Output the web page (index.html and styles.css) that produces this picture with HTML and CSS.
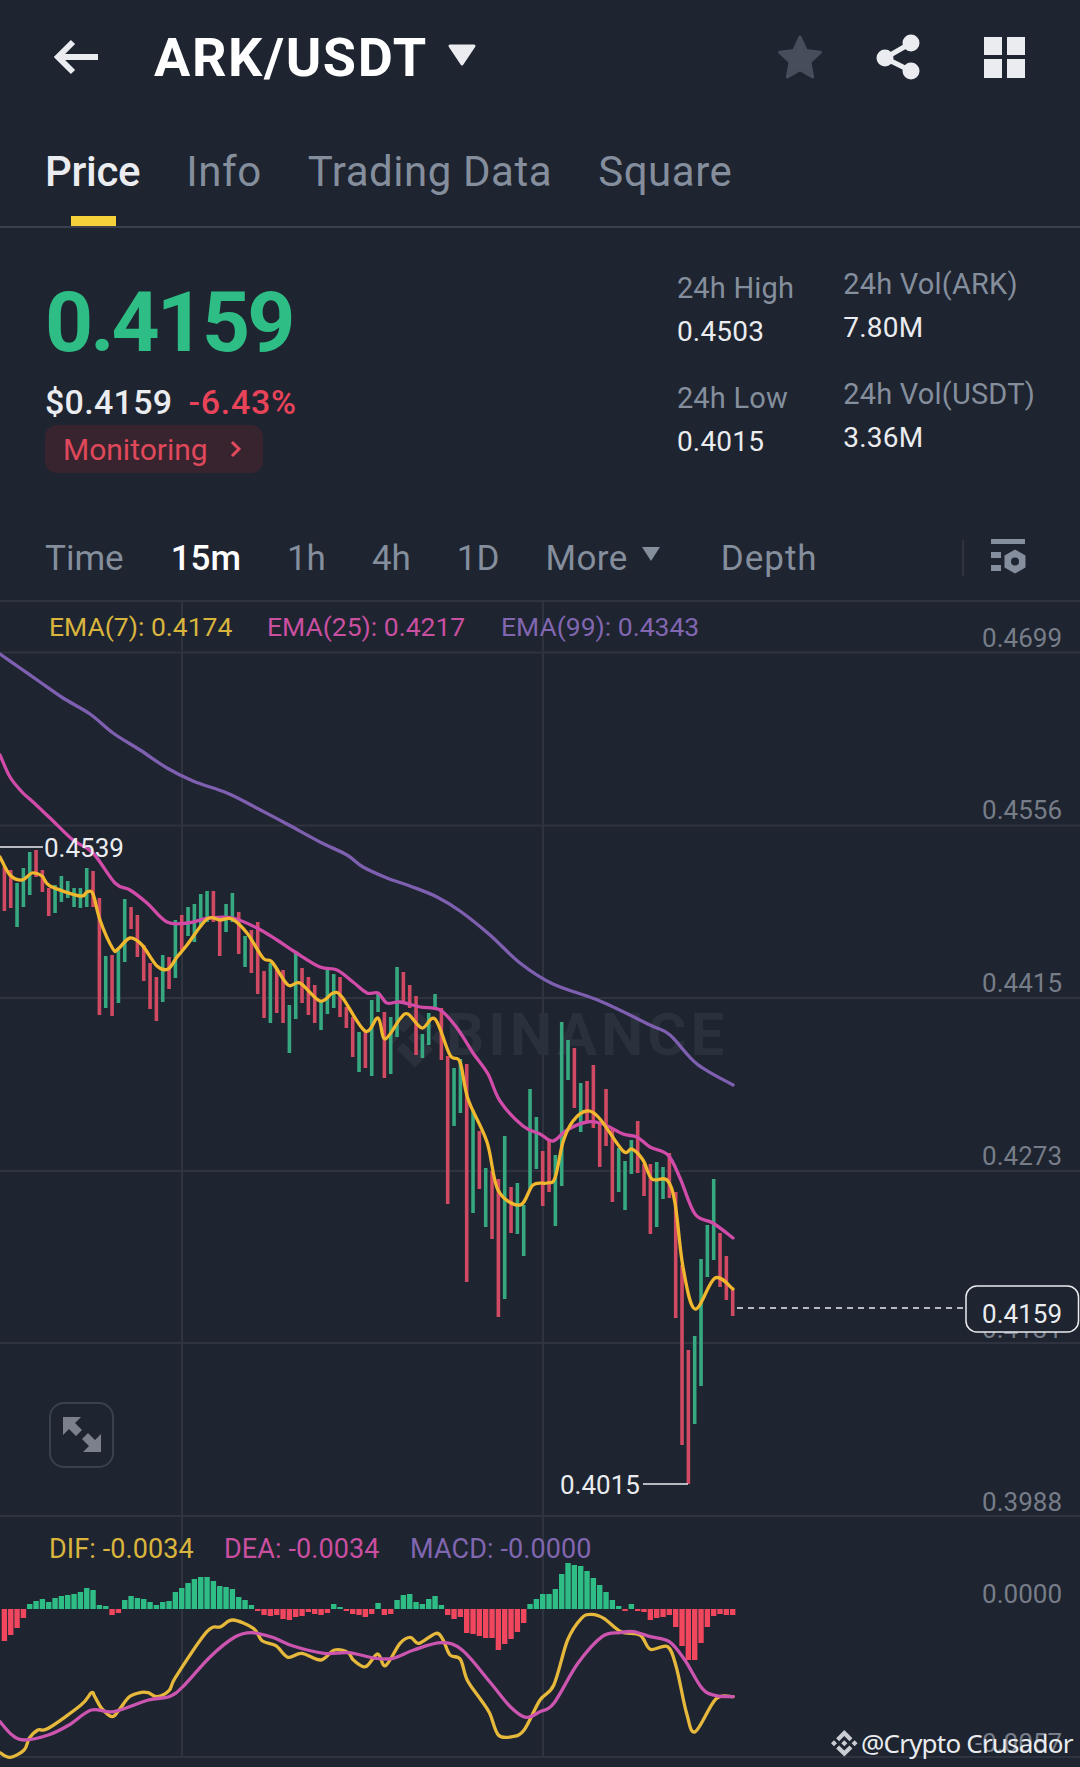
FILE: index.html
```html
<!DOCTYPE html>
<html lang="en">
<head>
    <meta charset="UTF-8">
    <meta name="viewport" content="width=device-width, initial-scale=1.0">
    <title>ARK/USDT</title>
    <link rel="stylesheet" href="styles.css">
</head>
<body>
    <header class="topbar">
        <svg class="icon-back" viewBox="0 0 46 36" width="46" height="36">
            <path d="M45 18H6M20 3 5 18l15 15" fill="none" stroke="#eaecef" stroke-width="6"/>
        </svg>
        <h1 class="pair">ARK/USDT</h1>
        <svg class="icon-caret" viewBox="0 0 30 24" width="30" height="24">
            <path d="M3 3h24L15 21z" fill="#eaecef" stroke="#eaecef" stroke-width="3" stroke-linejoin="round"/>
        </svg>
        <div class="topbar-actions">
            <svg class="icon-star" viewBox="0 0 46 46" width="46" height="46">
                <path d="M23 3l6.2 13.5 14.3 1.7-10.6 10 2.8 14.8L23 35.6 10.300 43l2.800-14.800L2.500 18.200l14.300-1.700z" fill="#474d5a" stroke="#474d5a" stroke-width="3" stroke-linejoin="round"/>
            </svg>
            <svg class="icon-share" viewBox="0 0 44 46" width="44" height="46">
                <path d="M35 9 9 24l26 13" fill="none" stroke="#eaecef" stroke-width="5"/>
                <circle cx="35" cy="9" r="8.500" fill="#eaecef"/>
                <circle cx="9" cy="24" r="8.500" fill="#eaecef"/>
                <circle cx="35" cy="37" r="8.500" fill="#eaecef"/>
            </svg>
            <div class="icon-grid"><span></span><span></span><span></span><span></span></div>
        </div>
    </header>

    <nav class="tabs">
        <a class="tab active">Price</a>
        <a class="tab">Info</a>
        <a class="tab">Trading Data</a>
        <a class="tab">Square</a>
    </nav>

    <section class="summary">
        <div class="price-box">
            <div class="price">0.4159</div>
            <div class="price-sub">
                <span class="usd">$0.4159</span>
                <span class="change">-6.43%</span>
            </div>
            <div class="monitor">
                Monitoring
                <svg viewBox="0 0 12 18" width="12" height="18">
                    <path d="M2 2l7 7-7 7" fill="none" stroke="#e0485c" stroke-width="3"/>
                </svg>
            </div>
        </div>
        <div class="stats">
            <div class="stat-col">
                <div class="stat-label">24h High</div>
                <div class="stat-value">0.4503</div>
                <div class="stat-label second">24h Low</div>
                <div class="stat-value">0.4015</div>
            </div>
            <div class="stat-col shifted">
                <div class="stat-label">24h Vol(ARK)</div>
                <div class="stat-value">7.80M</div>
                <div class="stat-label second">24h Vol(USDT)</div>
                <div class="stat-value">3.36M</div>
            </div>
        </div>
    </section>

    <div class="intervals">
        <span class="interval first">Time</span>
        <span class="interval current">15m</span>
        <span class="interval">1h</span>
        <span class="interval">4h</span>
        <span class="interval">1D</span>
        <span class="interval more">More</span>
        <svg class="icon-more" viewBox="0 0 20 15" width="20" height="15">
            <path d="M1 1h18L10 15z" fill="#848e9c"/>
        </svg>
        <span class="interval depth">Depth</span>
        <div class="divider"></div>
        <svg class="icon-settings" viewBox="0 0 36 36" width="36" height="36">
            <path d="M1 1h34v5H1zM1 14h10v6H1zM1 27h10v6H1z" fill="#848e9c"/>
            <path d="M25 11.500l10.500 6v12L25 35.500l-10.500-6v-12z" fill="#848e9c"/>
            <circle cx="25" cy="23.500" r="4" fill="#1e2430"/>
        </svg>
    </div>

    <div class="chart">
        <svg class="chart-svg" viewBox="0 602 1080 1165" width="1080" height="1165">
            <defs>
                <path id="binance-logo" d="M38.730 53.200l24.590-24.580 24.600 24.600 14.300-14.310L63.320 0 24.420 38.900zM0 63.310L14.300 49l14.310 14.310-14.310 14.300zM38.730 73.410L63.320 98l24.600-24.600 14.310 14.290-38.900 38.910-38.910-38.880zM98 63.310L112.300 49l14.310 14.300-14.310 14.320zM77.830 63.300L63.320 48.780 48.810 63.280l14.510 14.500z"/>
            </defs>
            <g id="grid"></g>
            <g class="watermark">
                <use href="#binance-logo" transform="translate(385 1008) scale(.47)"/>
                <text x="446" y="1055" class="watermark-text">BINANCE</text>
            </g>
            <g id="candles"></g>
            <g id="histogram"></g>
            <g id="lines"></g>

            <text x="49" y="636" class="legend ema7">EMA(7): 0.4174</text>
            <text x="267" y="636" class="legend ema25">EMA(25): 0.4217</text>
            <text x="501" y="636" class="legend ema99">EMA(99): 0.4343</text>

            <text x="1062" y="647" class="axis">0.4699</text>
            <text x="1062" y="819" class="axis">0.4556</text>
            <text x="1062" y="992" class="axis">0.4415</text>
            <text x="1062" y="1165" class="axis">0.4273</text>
            <text x="1062" y="1338" class="axis">0.4131</text>
            <text x="1062" y="1511" class="axis">0.3988</text>
            <text x="1062" y="1603" class="axis">0.0000</text>
            <text x="1062" y="1752" class="axis">-0.0057</text>

            <path d="M0 847H43M643 1484H688" stroke="#eaecef" stroke-width="1.500" fill="none"/>
            <text x="44" y="857" class="mark">0.4539</text>
            <text x="560" y="1494" class="mark">0.4015</text>

            <path d="M737 1308H966" stroke="#eaecef" stroke-width="1.500" stroke-dasharray="6 5" fill="none"/>
            <rect x="966" y="1286" width="112.500" height="46" rx="11" class="last-box"/>
            <text x="1062" y="1323" class="axis last-price">0.4159</text>

            <rect x="50" y="1403" width="63" height="64" rx="14" class="expand-box"/>
            <path d="M63 1417h18l-6 6 7 7-6 6-7-7-6 6zM101 1452H83l6-6-7-7 6-6 7 7 6-6z" fill="#7b808c"/>

            <text x="49" y="1558" class="legend macd ema7">DIF: -0.0034</text>
            <text x="224" y="1558" class="legend macd ema25">DEA: -0.0034</text>
            <text x="410" y="1558" class="legend macd ema99">MACD: -0.0000</text>

            <use href="#binance-logo" transform="translate(831 1730) scale(.21)" class="credit-logo"/>
            <text x="861" y="1753" class="credit">@Crypto Crusador</text>
        </svg>
    </div>

    <script src="chart.js"></script>
</body>
</html>
```

FILE: styles.css
```css
* {
    margin: 0;
    padding: 0;
    box-sizing: border-box;
}
body {
    width: 1080px;
    height: 1767px;
    font-family: Roboto, "Liberation Sans", sans-serif;
    background-color: #1e2430;
    color: #eaecef;
    overflow: hidden;
}
.topbar {
    display: flex;
    align-items: center;
    height: 114px;
    padding-left: 53px;
}
.pair {
    margin-left: 55px;
    font-size: 54px;
    font-weight: 700;
    letter-spacing: 1.6px;
    color: #fff;
}
.icon-caret {
    margin-left: 19px;
    margin-top: -4px;
}
.topbar-actions {
    display: flex;
    align-items: center;
    gap: 53px;
    margin-left: auto;
    padding-right: 55px;
}
.icon-grid {
    display: grid;
    grid-template-columns: 18px 18px;
    grid-template-rows: 18px 19px;
    gap: 4px 5px;
    margin-left: 11px;
}
.icon-grid span {
    background: #eaecef;
}
.tabs {
    display: flex;
    gap: 46px;
    height: 114px;
    padding: 34px 0 0 45px;
    border-bottom: 2px solid #3a404d;
}
.tab {
    position: relative;
    font-size: 42px;
    line-height: 48px;
    height: 48px;
    letter-spacing: 0.55px;
    color: #848e9c;
}
.tab.active {
    color: #eaecef;
    font-weight: 500;
    letter-spacing: -0.3px;
}
.tab.active::after {
    content: "";
    position: absolute;
    left: 26px;
    top: 68px;
    width: 45px;
    height: 10px;
    background: #f5d13a;
}
.summary {
    display: flex;
    justify-content: space-between;
    height: 296px;
    padding: 46px 0 0 45px;
}
.price {
    font-size: 84px;
    line-height: 98px;
    font-weight: 700;
    letter-spacing: -3px;
    color: #2ebd85;
}
.price-sub {
    display: flex;
    gap: 16px;
    margin-top: 10px;
    font-size: 34px;
    line-height: 40px;
    font-weight: 500;
    letter-spacing: 0.3px;
}
.change {
    color: #e94359;
    letter-spacing: 0.7px;
}
.monitor {
    display: inline-flex;
    align-items: center;
    gap: 22px;
    width: 218px;
    height: 48px;
    margin-top: 3px;
    padding-left: 18px;
    border-radius: 12px;
    background: #38242e;
    color: #e0485c;
    font-size: 30px;
}
.stats {
    display: flex;
    gap: 49px;
    margin-top: -3px;
    padding-right: 45px;
}
.stat-col.shifted {
    margin-top: -4px;
}
.stat-label {
    font-size: 29px;
    line-height: 34px;
    letter-spacing: 0.2px;
    color: #848e9c;
}
.stat-label.second {
    margin-top: 32px;
}
.stat-value {
    margin-top: 10px;
    font-size: 28px;
    line-height: 34px;
    letter-spacing: 0.2px;
    color: #eaecef;
}
.intervals {
    display: flex;
    align-items: center;
    height: 78px;
    padding: 0 0 8px 45px;
    border-bottom: 2px solid #2e333f;
}
.interval {
    margin-right: 46px;
    font-size: 35px;
    color: #848e9c;
}
.interval.first {
    margin-right: 47px;
}
.interval.current {
    color: #fff;
    font-weight: 500;
}
.interval.more {
    margin-right: 13px;
    letter-spacing: 0.4px;
}
.icon-more {
    margin-top: -10px;
}
.interval.depth {
    margin-left: 60px;
    margin-right: 0;
    letter-spacing: 1px;
}
.divider {
    width: 2px;
    height: 36px;
    margin-left: auto;
    background: #2e333f;
}
.icon-settings {
    margin: -4px 54px 0 26px;
}
.chart {
    height: 1165px;
}
.chart-svg {
    display: block;
}
.legend {
    font-size: 26.5px;
}
.legend.macd {
    font-size: 27px;
    letter-spacing: 0.1px;
}
.ema7 { fill: #d9b53e; }
.ema25 { fill: #c94fa0; }
.ema99 { fill: #8166b0; }
.axis {
    font-size: 26px;
    text-anchor: end;
    fill: #777d88;
}
.mark {
    font-size: 26px;
    fill: #eaecef;
}
.last-box {
    fill: #1e2430;
    stroke: #eaecef;
    stroke-width: 1.5;
}
.axis.last-price {
    fill: #eaecef;
}
.expand-box {
    fill: none;
    stroke: #3a404c;
    stroke-width: 2;
}
.watermark {
    fill: #2a303c;
}
.watermark-text {
    font-size: 60px;
    font-weight: 700;
    letter-spacing: 4px;
}
.credit-logo {
    fill: #c9ccd2;
}
.credit {
    font-family: "Noto Sans", sans-serif;
    font-size: 26px;
    letter-spacing: -0.8px;
    fill: #eaecef;
}
```

FILE: chart.js
```js
const NS = 'http://www.w3.org/2000/svg';
const GREEN = '#36a981', RED = '#cf4a62';

function add(parent, name, attrs) {
    const el = document.createElementNS(NS, name);
    for (const key in attrs) el.setAttribute(key, attrs[key]);
    document.getElementById(parent).appendChild(el);
}

function barX(i) {
    return 4.4 + 6.333 * i;
}

// smooth line through the points (catmull-rom to bezier)
function line(parent, pts, color) {
    let d = `M${pts[0][0]} ${pts[0][1]}`;
    for (let i = 0; i < pts.length - 1; i++) {
        const p0 = pts[i - 1] || pts[i], p1 = pts[i], p2 = pts[i + 1], p3 = pts[i + 2] || p2;
        const c1x = p1[0] + (p2[0] - p0[0]) / 6, c1y = p1[1] + (p2[1] - p0[1]) / 6;
        const c2x = p2[0] - (p3[0] - p1[0]) / 6, c2y = p2[1] - (p3[1] - p1[1]) / 6;
        d += `C${c1x.toFixed(1)} ${c1y.toFixed(1)} ${c2x.toFixed(1)} ${c2y.toFixed(1)} ${p2[0]} ${p2[1]}`;
    }
    add(parent, 'path', {
        d: d,
        fill: 'none',
        stroke: color,
        'stroke-width': 3.3,
        'stroke-linejoin': 'round',
        'stroke-linecap': 'round'
    });
}

// grid
[652.5, 825.5, 998, 1171, 1343, 1516, 1757].forEach(y => {
    add('grid', 'path', { d: `M0 ${y}H1080`, stroke: '#2e333f', 'stroke-width': 2 });
});
[182, 543].forEach(x => {
    add('grid', 'path', { d: `M${x} 602V1757`, stroke: '#2e333f', 'stroke-width': 2 });
});

// candles: [g/r, top, bottom] in page pixels
const candles = [
    ['r',867,911],['r',870,908],['g',883,927],['g',868,907],['g',852,895],['r',850,877],['r',870,892],['r',888,916],
    ['g',885,913],['g',876,902],['g',881,898],['g',888,907],['g',888,908],['g',868,907],['r',871,907],['r',898,1015],
    ['g',956,1008],['r',955,1016],['g',950,1003],['g',899,962],['r',907,929],['r',915,957],['r',945,981],['r',963,1009],
    ['r',977,1021],['g',955,1002],['r',957,989],['g',920,978],['r',915,950],['g',907,936],['g',904,942],['g',894,927],
    ['g',891,922],['r',891,922],['r',918,956],['g',904,932],['g',893,922],['r',912,954],['g',936,967],['r',930,973],
    ['r',922,994],['r',971,1018],['g',963,1023],['r',968,1013],['r',970,1023],['g',1005,1053],['g',951,1019],['r',968,1003],
    ['r',977,1015],['r',985,1023],['g',1002,1030],['g',970,1014],['g',974,1008],['r',977,1017],['r',1007,1028],['r',1017,1057],
    ['g',1032,1072],['r',1030,1068],['g',1000,1076],['g',992,1012],['r',1012,1078],['g',1017,1074],['g',967,1037],
    ['r',972,1001],['r',985,1008],['r',996,1055],['g',1034,1058],['g',1013,1045],['g',994,1008],['r',1008,1060],['r',1056,1204],
    ['g',1068,1126],['g',1059,1113],['r',1064,1282],['g',1110,1213],['r',1131,1189],['g',1168,1227],['r',1171,1239],['r',1179,1317],
    ['g',1136,1299],['r',1187,1233],['g',1183,1234],['g',1205,1256],['g',1089,1189],['g',1117,1169],['r',1151,1206],['r',1140,1192],
    ['g',1155,1226],['g',1022,1186],['g',1040,1080],['r',1048,1108],['g',1083,1132],['r',1081,1121],['r',1065,1128],['r',1124,1167],
    ['r',1089,1146],['r',1128,1202],['g',1148,1192],['g',1161,1210],['g',1140,1174],['r',1121,1173],['r',1164,1196],['r',1164,1234],
    ['g',1162,1227],['g',1167,1199],['r',1153,1198],['r',1192,1318],['r',1265,1445],['r',1350,1484],['g',1336,1424],['g',1259,1386],
    ['g',1225,1277],['g',1179,1260],['r',1233,1287],['r',1256,1300],['r',1290,1316]
];
candles.forEach((c, i) => {
    add('candles', 'path', {
        d: `M${barX(i)} ${c[1]}V${c[2]}`,
        stroke: c[0] === 'g' ? GREEN : RED,
        'stroke-width': 3.6
    });
});

line('lines', [[0,654],[20,668],[40,682],[63,698],[90,714],[113,733],[140,750],[167,768],[193,781],[227,793],[253,806],[287,824],[320,842],[347,855],[363,867],[387,878],[410,886],[437,897],[460,911],[490,935],[520,963],[553,984],[600,1001],[650,1025],[670,1035],[697,1064],[733,1085]], '#7f5fb0');

line('lines', [[0,755],[10,777],[22,792],[33,802],[50,818],[73,840],[93,853],[115,883],[130,890],[147,903],[167,922],[187,923],[210,918],[233,918],[257,928],[277,940],[295,952],[320,967],[337,970],[353,982],[367,993],[378,993],[387,1003],[400,1002],[420,1007],[440,1010],[457,1028],[473,1053],[488,1074],[500,1101],[523,1126],[540,1134],[553,1141],[567,1130],[587,1122],[603,1124],[623,1134],[637,1137],[650,1147],[668,1155],[680,1178],[695,1214],[713,1223],[733,1238]], '#d04ca8');

line('lines', [[0,857],[10,875],[22,880],[32,873],[42,876],[50,886],[80,896],[87,892],[93,894],[100,920],[113,949],[118,949],[130,938],[142,945],[157,966],[168,969],[177,957],[187,945],[207,919],[220,920],[232,919],[247,933],[263,958],[272,962],[288,985],[300,983],[320,1001],[333,993],[342,997],[365,1031],[378,1018],[385,1039],[400,1019],[408,1014],[422,1028],[435,1019],[450,1055],[460,1062],[468,1099],[487,1142],[498,1190],[520,1205],[533,1185],[547,1183],[555,1178],[563,1142],[573,1121],[587,1111],[600,1119],[623,1151],[632,1149],[643,1160],[652,1179],[667,1180],[675,1203],[683,1267],[695,1309],[715,1278],[733,1289]], '#f0b72f');

// MACD histogram, heights in pixels from the zero line
const macd = [
    -32,-26,-19,-9,5,8,10,7,11,13,14,15,17,21,19,4,3,-6,-4,9,13,11,10,7,4,7,8,17,21,26,30,32,32,28,23,22,20,12,9,4,
    -2,-6,-7,-6,-10,-11,-8,-7,-3,-5,-6,-4,5,2,-2,-5,-6,-8,-5,6,-6,-5,9,14,15,7,5,10,13,4,-6,-10,-8,-24,-25,-27,-29,-29,-41,-35,-30,-23,-14,5,10,
    15,15,20,35,46,44,43,38,31,24,17,9,3,-2,5,-2,-3,-11,-9,-8,-6,-18,-37,-51,-51,-34,-18,-7,-5,-6,-6
];
macd.forEach((v, i) => {
    add('histogram', 'rect', {
        x: barX(i) - 2.7,
        y: v > 0 ? 1609 - v : 1609,
        width: 5.4,
        height: Math.abs(v),
        fill: v > 0 ? '#2ebd85' : '#f0475f'
    });
});

// the MACD lines were read in zoomed units, so scale them down
function macdPoints(list) {
    return list.map(p => [+(p[0] / 2.9).toFixed(1), +(1500 + p[1] / 3).toFixed(1)]);
}
const shifted = list => list.map(p => [p[0] + 1566, p[1]]);

line('lines', macdPoints([[0,758],[30,772],[70,750],[85,715],[110,690],[140,685],[235,615],[265,578],[275,590],[295,625],[325,650],[345,630],[375,590],[410,577],[430,578],[455,590],[490,572],[510,530],[600,395],[640,380],[675,360],[735,385],[760,422],[800,437],[835,472],[875,460],[930,480],[970,450],[1010,458],[1025,480],[1060,500],[1095,462],[1118,497],[1160,430],[1190,412],[1215,430],[1265,400],[1285,420],[1305,465],[1335,478],[1355,540],[1395,600],[1420,640],[1445,705],[1485,710],[1520,690]].concat(shifted([[0,600],[40,555],[80,420],[120,355],[150,343],[185,355],[235,395],[290,405],[320,448],[370,440],[395,500],[425,640],[450,695],[510,597],[560,590]]))), '#e6b93c');

line('lines', macdPoints([[0,665],[35,705],[70,720],[140,705],[200,675],[265,630],[330,635],[430,600],[490,590],[530,560],[610,470],[680,412],[730,398],[790,412],[850,438],[940,460],[1010,458],[1090,475],[1140,475],[1200,450],[1280,428],[1340,450],[1420,545],[1480,620],[1525,652]].concat(shifted([[0,635],[40,610],[110,490],[180,410],[230,398],[270,395],[320,410],[375,425],[420,480],[470,565],[510,587],[560,590]]))), '#cc55b0');
```
